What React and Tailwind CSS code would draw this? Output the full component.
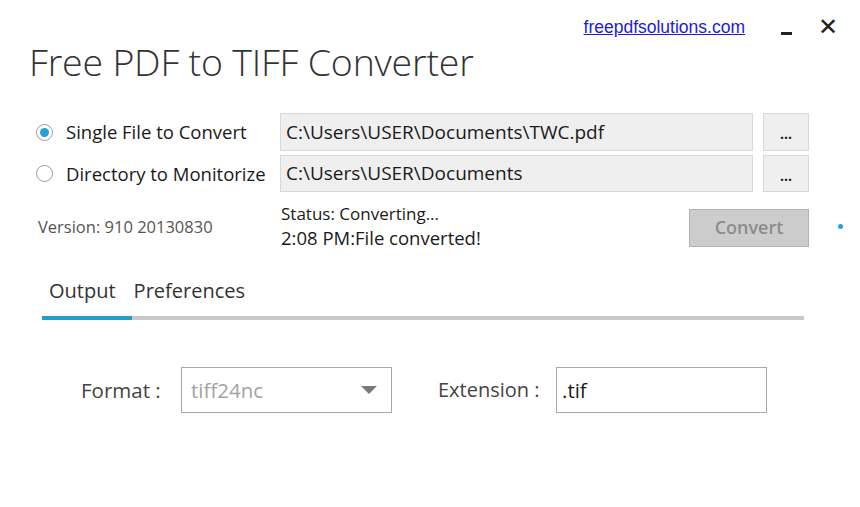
import React, { useState } from 'react';

const font = { fontFamily: '"Open Sans", "Noto Sans", sans-serif' };

function Radio({ checked }) {
  return (
    <span className="w-[17px] h-[17px] rounded-full border border-[#9a9a9a] bg-white flex items-center justify-center flex-shrink-0">
      {checked && <span className="w-[9px] h-[9px] rounded-full bg-[#2a9fd6]" />}
    </span>
  );
}

export default function App() {
  const [mode, setMode] = useState('single');

  return (
    <div className="w-[860px] h-[507px] bg-white overflow-hidden text-[#1a1a1a]" style={font}>
      {/* header */}
      <div className="flex items-start">
        <h1 className="pl-[29px] pt-[36px] text-[37.5px] font-light leading-[52px] text-[#333] tracking-[-0.2px]">
          Free PDF to TIFF Converter
        </h1>
        <div className="ml-auto pt-[14px] pr-[22px] flex items-center">
          <a href="#" className="text-[17.5px] text-[#1a1ae0] underline" style={{ fontFamily: '"Liberation Sans", Arial, sans-serif' }}>
            freepdfsolutions.com
          </a>
          <span className="ml-[36px] w-[11px] h-[3px] bg-[#222] mt-[12px]" />
          <span className="ml-[26px] text-[24px] leading-none text-[#222]" style={{ fontFamily: '"Liberation Sans", Arial, sans-serif' }}>✕</span>
        </div>
      </div>

      {/* source rows */}
      <div className="mt-[25px] pl-[36px] pr-[51px] flex flex-col gap-[4px]">
        <div className="flex items-center h-[38px]">
          <button onClick={() => setMode('single')} className="w-[244px] flex items-center gap-[13px] text-[18.5px]">
            <Radio checked={mode === 'single'} />
            <span>Single File to Convert</span>
          </button>
          <div className="w-[473px] h-full bg-[#efefef] border border-[#d8d8d8] flex items-center px-[5px] text-[19px]">
            C:\Users\USER\Documents\TWC.pdf
          </div>
          <button className="ml-[10px] w-[46px] h-full bg-[#efefef] border border-[#d8d8d8] text-[14px] font-bold leading-none pt-[4px]">...</button>
        </div>
        <div className="flex items-center h-[37px]">
          <button onClick={() => setMode('dir')} className="w-[244px] flex items-center gap-[13px] text-[18.5px]">
            <Radio checked={mode === 'dir'} />
            <span>Directory to Monitorize</span>
          </button>
          <div className="w-[473px] h-full bg-[#efefef] border border-[#d8d8d8] flex items-center px-[5px] text-[19px]">
            C:\Users\USER\Documents
          </div>
          <button className="ml-[10px] w-[46px] h-full bg-[#efefef] border border-[#d8d8d8] text-[14px] font-bold leading-none pt-[4px]">...</button>
        </div>
      </div>

      {/* status row */}
      <div className="mt-[14px] flex items-center">
        <div className="pl-[38px] w-[281px] text-[16.5px] text-[#555]">Version: 910 20130830</div>
        <div className="w-[408px] leading-[24px] -mt-[4px]">
          <div className="text-[17px]">Status: Converting...</div>
          <div className="text-[18.5px] leading-[23px]">2:08 PM:File converted!</div>
        </div>
        <button className="w-[120px] h-[38px] bg-[#cccccc] border border-[#b3b3b3] text-[18px] text-[#8c8c8c] font-semibold">
          Convert
        </button>
        <span className="ml-[29px] -mt-[3px] w-[5px] h-[5px] rounded-full bg-[#2a9fd6]" />
      </div>

      {/* tabs */}
      <div className="mt-[28px] ml-[42px] w-[762px]">
        <div className="flex text-[20px] text-[#333] leading-[28px] pl-[7px] gap-[18px]">
          <span>Output</span>
          <span>Preferences</span>
        </div>
        <div className="mt-[11px] h-[4px] bg-[#c9c9c9] flex">
          <div className="w-[90px] bg-[#1e9fd0]" />
        </div>
      </div>

      {/* output form */}
      <div className="mt-[47px] flex items-center">
        <span className="pl-[81px] w-[181px] text-[20.5px] text-[#444]">Format :</span>
        <div className="w-[211px] h-[46px] border border-[#a8a8a8] flex items-center px-[9px] text-[20.5px] text-[#a3a3a3]">
          <span>tiff24nc</span>
          <svg className="ml-auto mr-[5px]" width="16" height="8" viewBox="0 0 16 8">
            <path d="M0 0 H16 L8 8 Z" fill="#7a7a7a" />
          </svg>
        </div>
        <span className="ml-[46px] w-[118px] text-[20px] text-[#444]">Extension :</span>
        <div className="w-[211px] h-[46px] border border-[#a8a8a8] flex items-center px-[5px] text-[20.5px]">
          .tif
        </div>
      </div>
    </div>
  );
}
